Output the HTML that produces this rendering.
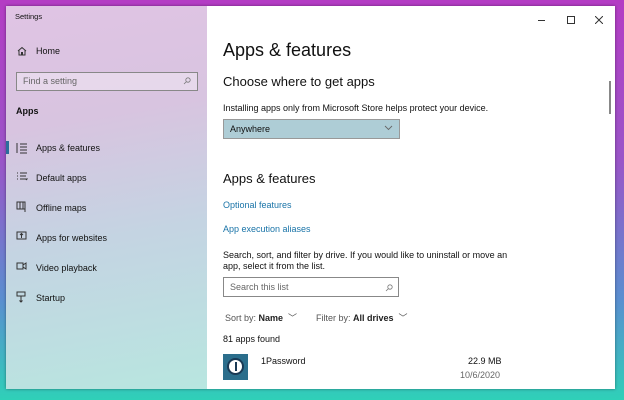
<!DOCTYPE html><html><head><style>
*{margin:0;padding:0;box-sizing:border-box}
body{width:624px;height:400px;overflow:hidden;font-family:"Liberation Sans",sans-serif;background:linear-gradient(180deg,#b43cc4 0%,#9a55c8 40%,#5a8fd0 75%,#2fd0b8 100%);position:relative}
.win{position:absolute;left:6px;top:6px;width:609px;height:383px;background:#fff;box-shadow:0 0 3px rgba(0,0,0,.4);overflow:hidden}
.side{position:absolute;left:0;top:0;width:201px;height:383px;background:linear-gradient(170deg,#e0c4e4 0%,#d8c4e0 30%,#c4d4e2 60%,#b8e6e0 100%)}
.t{position:absolute;white-space:nowrap;color:#111}
.s{font-size:9px}
.n{font-size:9px}
.link{color:#1a74a8!important;font-size:9px}
.box{position:absolute;border:1.5px solid #888;background:transparent}
</style></head><body>
<div class="win">
<div class="side">
<div class="t" style="left:9px;top:6px;font-size:7.5px">Settings</div>
<svg style="position:absolute;left:11px;top:40px" width="10" height="10" viewBox="0 0 10 10"><path d="M1 5L5 1.5 9 5M2 4.5V9h2.5V6.5h1V9H8V4.5" fill="none" stroke="#333" stroke-width="1"/></svg>
<div class="t n" style="left:30px;top:40px">Home</div>
<div class="box" style="left:10px;top:66px;width:182px;height:19px;background:rgba(255,255,255,.35)"></div>
<div class="t" style="left:17px;top:70px;font-size:9px;color:#666">Find a setting</div>
<svg style="position:absolute;left:177px;top:71px" width="8" height="8" viewBox="0 0 8 8"><circle cx="5" cy="3" r="2.2" fill="none" stroke="#777" stroke-width=".8"/><path d="M3.4 4.6L1 7" stroke="#777" stroke-width=".8"/></svg>
<div class="t" style="left:10px;top:100px;font-size:9px;font-weight:bold">Apps</div>
<div style="position:absolute;left:0;top:135px;width:3px;height:13px;background:#2b6e9b"></div>
<div class="t n" style="left:30px;top:137px">Apps &amp; features</div>
<div class="t n" style="left:30px;top:167px">Default apps</div>
<div class="t n" style="left:30px;top:197px">Offline maps</div>
<div class="t n" style="left:30px;top:227px">Apps for websites</div>
<div class="t n" style="left:30px;top:257px">Video playback</div>
<div class="t n" style="left:30px;top:287px">Startup</div>
<svg style="position:absolute;left:10px;top:136px" width="12" height="170" viewBox="0 0 12 170" fill="none" stroke="#333" stroke-width="1">
<path d="M1 1v10M4 2h7M4 5h7M4 8h7M4 11h7"/>
<path d="M1 31h1M1 34h1M1 37h1M4 31h7M4 34h6M4 37h7l-1 1"/>
<path d="M1 60h8v7H1z M4 60v7M7 60v7M9 67v3"/>
<path d="M1 90h9v7H1zM5.5 96v-4M4 93l1.5-1.5L7 93"/>
<path d="M1 121h6v6H1zM7 123l3-2v6l-3-2"/>
<path d="M1 150h8v4H1zM5 154v6M3.5 158.5L5 160l1.5-1.5"/>
</svg>
</div>
<div class="t" style="left:217px;top:34px;font-size:18px;color:#111">Apps &amp; features</div>
<div class="t" style="left:217px;top:68px;font-size:13px">Choose where to get apps</div>
<div class="t s" style="left:217px;top:97px">Installing apps only from Microsoft Store helps protect your device.</div>
<div style="position:absolute;left:217px;top:113px;width:177px;height:20px;background:#aecdd6;border:1.5px solid #999"></div>
<div class="t s" style="left:224px;top:118px">Anywhere</div>
<svg style="position:absolute;left:378px;top:119px" width="9" height="6" viewBox="0 0 9 6"><path d="M1 1l3.5 3.5L8 1" fill="none" stroke="#666" stroke-width=".9"/></svg>
<div class="t" style="left:217px;top:165px;font-size:13px">Apps &amp; features</div>
<div class="t link" style="left:217px;top:194px">Optional features</div>
<div class="t link" style="left:217px;top:218px">App execution aliases</div>
<div class="t s" style="left:217px;top:244px;line-height:11px">Search, sort, and filter by drive. If you would like to uninstall or move an<br>app, select it from the list.</div>
<div class="box" style="left:217px;top:271px;width:176px;height:20px"></div>
<div class="t s" style="left:224px;top:276px;color:#666">Search this list</div>
<svg style="position:absolute;left:379px;top:278px" width="8" height="8" viewBox="0 0 8 8"><circle cx="5" cy="3" r="2.2" fill="none" stroke="#777" stroke-width=".8"/><path d="M3.4 4.6L1 7" stroke="#777" stroke-width=".8"/></svg>
<div class="t s" style="left:219px;top:305px;color:#555">Sort by: <b style="color:#222">Name</b> &nbsp;﹀</div>
<div class="t s" style="left:310px;top:305px;color:#555">Filter by: <b style="color:#222">All drives</b> &nbsp;﹀</div>
<div class="t s" style="left:217px;top:328px">81 apps found</div>
<div style="position:absolute;left:217px;top:348px;width:25px;height:26px;background:#2b6e8c"></div>
<div style="position:absolute;left:221px;top:352px;width:17px;height:17px;border-radius:50%;background:#fff;border:2px solid #1a3a55"></div>
<div style="position:absolute;left:228.5px;top:356px;width:2px;height:9px;background:#1a3a55"></div>
<div class="t s" style="left:255px;top:350px">1Password</div>
<div class="t s" style="left:462px;top:350px">22.9 MB</div>
<div class="t s" style="left:454px;top:364px;color:#666">10/6/2020</div>
<div style="position:absolute;left:603px;top:75px;width:1.5px;height:33px;background:#888"></div>
<div style="position:absolute;left:532px;top:14px;width:7px;height:1px;background:#333"></div>
<div style="position:absolute;left:561px;top:10px;width:8px;height:8px;border:1px solid #333"></div>
<svg style="position:absolute;left:589px;top:10px" width="8" height="8" viewBox="0 0 8 8"><path d="M0 0L8 8M8 0L0 8" stroke="#333" stroke-width="1"/></svg>
</div>
</body></html>
